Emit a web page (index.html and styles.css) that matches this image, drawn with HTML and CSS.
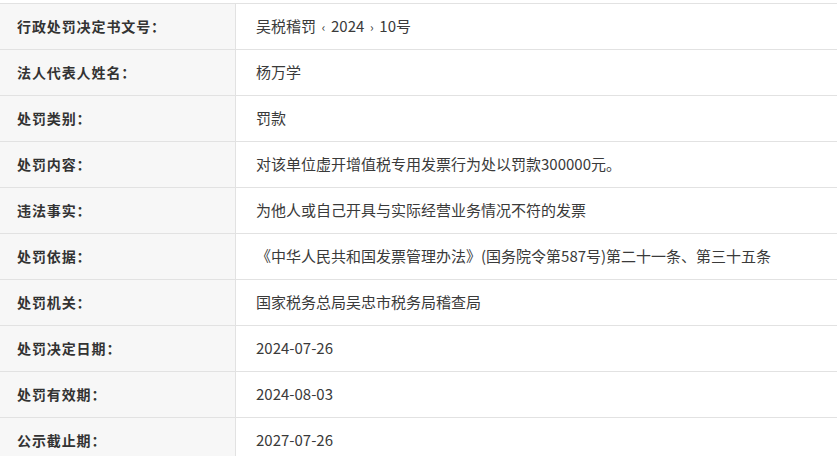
FILE: index.html
```html
<!DOCTYPE html>
<html lang="zh-CN">
<head>
  <meta charset="UTF-8" />
  <meta name="viewport" content="width=device-width, initial-scale=1.0" />
  <title>行政处罚决定书</title>
  <link rel="stylesheet" href="styles.css">
</head>
<body>
  <div class="wrap">
    <table class="info">
      <tr><th>行政处罚决定书文号：</th><td>吴税稽罚<span class="br">‹</span>2024<span class="br">›</span>10号</td></tr>
      <tr><th>法人代表人姓名：</th><td>杨万学</td></tr>
      <tr><th>处罚类别：</th><td>罚款</td></tr>
      <tr><th>处罚内容：</th><td>对该单位虚开增值税专用发票行为处以罚款300000元。</td></tr>
      <tr><th>违法事实：</th><td>为他人或自己开具与实际经营业务情况不符的发票</td></tr>
      <tr><th>处罚依据：</th><td>《中华人民共和国发票管理办法》(国务院令第587号)第二十一条、第三十五条</td></tr>
      <tr><th>处罚机关：</th><td>国家税务总局吴忠市税务局稽查局</td></tr>
      <tr><th>处罚决定日期：</th><td>2024-07-26</td></tr>
      <tr><th>处罚有效期：</th><td>2024-08-03</td></tr>
      <tr><th>公示截止期：</th><td>2027-07-26</td></tr>
    </table>
  </div>
</body>
</html>
```

FILE: styles.css
```css
body {
  margin: 0;
  background: #fff;
  font-family: "Noto Sans CJK SC", "Microsoft YaHei", sans-serif;
  color: #333;
  overflow: hidden;
}
.wrap {
  padding-top: 3px;
}
.info {
  width: 100%;
  border-collapse: collapse;
}
.info tr {
  height: 46px;
}
.info th,
.info td {
  border-top: 1px solid #e2e2e2;
  border-bottom: 1px solid #e2e2e2;
  padding: 0 0 2px 0;
  text-align: left;
  vertical-align: middle;
}
.info th {
  width: 218px;
  padding-left: 17px;
  background: #f7f7f7;
  border-right: 1px solid #e2e2e2;
  font-size: 14px;
  font-weight: bold;
  letter-spacing: 0.9px;
}
.info td {
  padding-left: 20px;
  background: #fff;
  font-size: 15px;
  color: #3a3a3a;
}
.br {
  display: inline-block;
  width: 15px;
  text-align: center;
  font-size: 12px;
}
```
